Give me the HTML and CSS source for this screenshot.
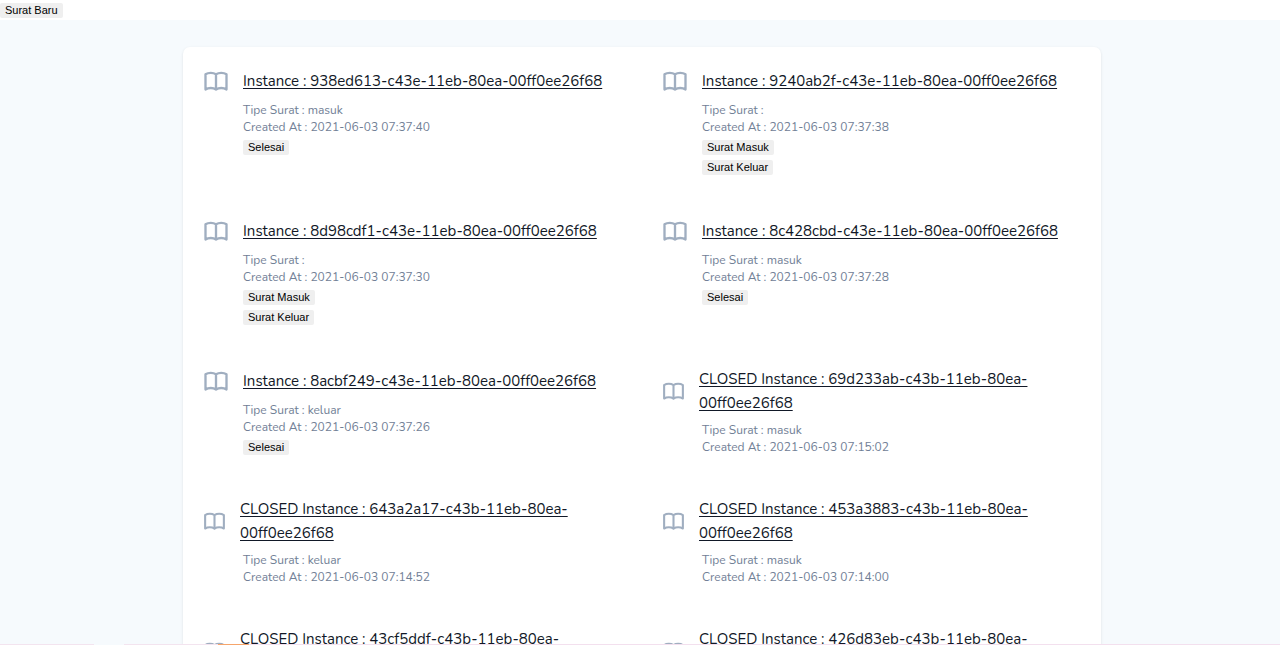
FILE: index.html
```html
<!DOCTYPE html>
<html lang="id">
<head>
  <meta charset="UTF-8">
  <meta name="viewport" content="width=device-width, initial-scale=1">
  <title>Surat</title>
  <link rel="stylesheet" href="styles.css">
</head>
<body>
  <!-- book icon, used by every instance -->
  <svg class="sprite" aria-hidden="true">
    <symbol id="book" viewBox="0 0 24 24">
      <path d="M12 6.253v13m0-13C10.832 5.477 9.246 5 7.5 5S4.168 5.477 3 6.253v13C4.168 18.477 5.754 18 7.5 18s3.332.477 4.5 1.253m0-13C13.168 5.477 14.754 5 16.5 5c1.747 0 3.332.477 4.5 1.253v13C19.832 18.477 18.247 18 16.5 18c-1.746 0-3.332.477-4.5 1.253"/>
    </symbol>
  </svg>

  <form class="topbar">
    <button type="button">Surat Baru</button>
  </form>

  <main>
    <div class="card">
      <div class="item">
        <div class="title">
          <svg class="icon"><use href="#book"/></svg>
          <a href="#">Instance : 938ed613-c43e-11eb-80ea-00ff0ee26f68</a>
        </div>
        <div class="detail">
          <p>Tipe Surat : masuk</p>
          <p>Created At : 2021-06-03 07:37:40</p>
          <button type="button">Selesai</button>
        </div>
      </div>

      <div class="item">
        <div class="title">
          <svg class="icon"><use href="#book"/></svg>
          <a href="#">Instance : 9240ab2f-c43e-11eb-80ea-00ff0ee26f68</a>
        </div>
        <div class="detail">
          <p>Tipe Surat :</p>
          <p>Created At : 2021-06-03 07:37:38</p>
          <button type="button">Surat Masuk</button>
          <button type="button">Surat Keluar</button>
        </div>
      </div>

      <div class="item">
        <div class="title">
          <svg class="icon"><use href="#book"/></svg>
          <a href="#">Instance : 8d98cdf1-c43e-11eb-80ea-00ff0ee26f68</a>
        </div>
        <div class="detail">
          <p>Tipe Surat :</p>
          <p>Created At : 2021-06-03 07:37:30</p>
          <button type="button">Surat Masuk</button>
          <button type="button">Surat Keluar</button>
        </div>
      </div>

      <div class="item">
        <div class="title">
          <svg class="icon"><use href="#book"/></svg>
          <a href="#">Instance : 8c428cbd-c43e-11eb-80ea-00ff0ee26f68</a>
        </div>
        <div class="detail">
          <p>Tipe Surat : masuk</p>
          <p>Created At : 2021-06-03 07:37:28</p>
          <button type="button">Selesai</button>
        </div>
      </div>

      <div class="item">
        <div class="title">
          <svg class="icon"><use href="#book"/></svg>
          <a href="#">Instance : 8acbf249-c43e-11eb-80ea-00ff0ee26f68</a>
        </div>
        <div class="detail">
          <p>Tipe Surat : keluar</p>
          <p>Created At : 2021-06-03 07:37:26</p>
          <button type="button">Selesai</button>
        </div>
      </div>

      <div class="item closed">
        <div class="title">
          <svg class="icon"><use href="#book"/></svg>
          <a href="#">CLOSED Instance : 69d233ab-c43b-11eb-80ea-00ff0ee26f68</a>
        </div>
        <div class="detail">
          <p>Tipe Surat : masuk</p>
          <p>Created At : 2021-06-03 07:15:02</p>
        </div>
      </div>

      <div class="item closed">
        <div class="title">
          <svg class="icon"><use href="#book"/></svg>
          <a href="#">CLOSED Instance : 643a2a17-c43b-11eb-80ea-00ff0ee26f68</a>
        </div>
        <div class="detail">
          <p>Tipe Surat : keluar</p>
          <p>Created At : 2021-06-03 07:14:52</p>
        </div>
      </div>

      <div class="item closed">
        <div class="title">
          <svg class="icon"><use href="#book"/></svg>
          <a href="#">CLOSED Instance : 453a3883-c43b-11eb-80ea-00ff0ee26f68</a>
        </div>
        <div class="detail">
          <p>Tipe Surat : masuk</p>
          <p>Created At : 2021-06-03 07:14:00</p>
        </div>
      </div>

      <div class="item closed">
        <div class="title">
          <svg class="icon"><use href="#book"/></svg>
          <a href="#">CLOSED Instance : 43cf5ddf-c43b-11eb-80ea-00ff0ee26f68</a>
        </div>
      </div>

      <div class="item closed">
        <div class="title">
          <svg class="icon"><use href="#book"/></svg>
          <a href="#">CLOSED Instance : 426d83eb-c43b-11eb-80ea-00ff0ee26f68</a>
        </div>
      </div>
    </div>
  </main>

  <div class="bottom-line"></div>
</body>
</html>
```

FILE: styles.css
```css
* {
  box-sizing: border-box;
}

body {
  margin: 0;
  height: 100vh;
  overflow-x: hidden;
  scrollbar-width: none;
  background: #f6fafd;
  font-family: Nunito, 'Open Sans', sans-serif;
  color: #1a202c;
}

.sprite {
  display: none;
}

.topbar {
  background: #fff;
  height: 20px;
  padding-top: 3px;
}

button {
  display: block;
  height: 15px;
  padding: 0 5px;
  border: none;
  border-radius: 2px;
  background: #efefef;
  color: #000;
  font-family: 'Liberation Sans', Arial, sans-serif;
  font-size: 11px;
  line-height: 15px;
  cursor: pointer;
}

main {
  padding: 27px 20px 27px 24px;
}

.card {
  display: grid;
  grid-template-columns: 1fr 1fr;
  max-width: 918px;
  margin: 0 auto;
  background: #fff;
  border-radius: 7px;
  box-shadow: 0 1px 3px rgba(0, 0, 0, 0.1);
}

.item {
  padding: 20px 19px 21px;
}

.title {
  display: flex;
  align-items: center;
  gap: 13px;
  min-height: 28px;
}

.title a {
  color: #111827;
  font-size: 15px;
  line-height: 24px;
  text-decoration: underline;
  text-underline-offset: 2px;
}

.icon {
  flex-shrink: 0;
  width: 28px;
  height: 28px;
  fill: none;
  stroke: #a0aec0;
  stroke-width: 2;
  stroke-linecap: round;
  stroke-linejoin: round;
}

.closed .icon {
  width: 25px;
}

.detail {
  margin: 7px 0 0 41px;
}

.detail p {
  margin: 0;
  color: #718096;
  font-size: 12px;
  line-height: 17px;
}

.detail button {
  margin: 4px 0 1px;
}

.detail button + button {
  margin-top: 5px;
}

.bottom-line {
  position: fixed;
  left: 0;
  right: 0;
  bottom: 0;
  height: 1px;
  background: linear-gradient(to right, #f3e4ef 94px, #f6fafd 94px, #f6fafd 124px, #f3e4ef 124px, #f3e4ef 218px, #f6a56b 218px, #f6a56b 249px, #f3e0ee 249px);
}

@media (max-width: 700px) {
  .card {
    grid-template-columns: 1fr;
  }
}
```
